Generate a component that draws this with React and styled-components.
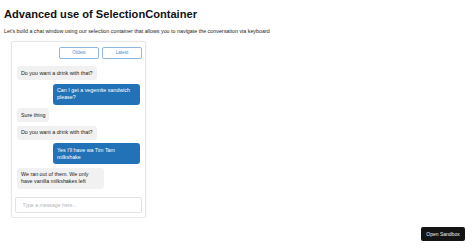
import React from "react";
import styled, { createGlobalStyle } from "styled-components";

const Global = createGlobalStyle`
  html, body { margin: 0; padding: 0; background: #ffffff; }
  body { font-family: "Liberation Sans", Arial, sans-serif; color: #111; }
`;

const Page = styled.div`
  padding: 0 4px;
`;

const Title = styled.h2`
  margin: 6.7px 0 0;
  font-size: 11.1px;
  line-height: 14px;
  font-weight: 700;
  color: #111;
`;

const Intro = styled.p`
  margin: 7px 0 0;
  font-size: 5.35px;
  line-height: 7px;
  color: #222;
`;

const Chat = styled.div`
  margin: 6.3px 0 0 7px;
  width: 135px;
  box-sizing: border-box;
  border: 1px solid #e6e6e6;
  border-radius: 2px;
  box-shadow: 0 0 2px rgba(0, 0, 0, 0.06);
  display: flex;
  flex-direction: column;
  padding: 5px 3px 4px;
`;

const Toolbar = styled.div`
  display: flex;
  justify-content: flex-end;
  gap: 3px;
`;

const NavButton = styled.button`
  width: 40px;
  height: 12.5px;
  padding: 0;
  border: 1px solid #8db8e0;
  border-radius: 2px;
  background: #fff;
  color: #4a8fd0;
  font-family: "Liberation Sans", Arial, sans-serif;
  font-size: 4.6px;
  line-height: 1;
  cursor: pointer;
`;

const Messages = styled.div`
  display: flex;
  flex-direction: column;
  gap: 3.4px;
  padding: 6.5px 2px 0;
`;

const Bubble = styled.div`
  max-width: 79px;
  padding: 3.6px 4px;
  border-radius: 3px;
  font-size: 5.35px;
  line-height: 7px;
  align-self: ${(p) => (p.$mine ? "flex-end" : "flex-start")};
  background: ${(p) => (p.$mine ? "#2272b8" : "#f1f1f1")};
  color: ${(p) => (p.$mine ? "#ffffff" : "#1a1a1a")};
`;

const Input = styled.input`
  margin-top: 8px;
  height: 16px;
  box-sizing: border-box;
  border: 1px solid #e3e3e3;
  border-radius: 2px;
  padding: 0 6.5px;
  font-family: "Liberation Sans", Arial, sans-serif;
  font-size: 5.2px;
  color: #333;
  outline: none;
  &::placeholder { color: #b5b5b5; }
`;

const Sandbox = styled.button`
  position: fixed;
  right: 9px;
  bottom: 7px;
  width: 44px;
  height: 14px;
  padding: 0;
  border: none;
  border-radius: 2px;
  background: #141414;
  color: #f2f2f2;
  font-family: "Liberation Sans", Arial, sans-serif;
  font-size: 5px;
`;

const messages = [
  { mine: false, text: "Do you want a drink with that?" },
  { mine: true, text: "Can I get a vegemite sandwich please?" },
  { mine: false, text: "Sure thing" },
  { mine: false, text: "Do you want a drink with that?" },
  { mine: true, text: "Yes I'll have wa Tim Tam milkshake" },
  { mine: false, text: "We ran out of them. We only have vanilla milkshakes left" },
];

export default function App() {
  return (
    <>
      <Global />
      <Page>
        <Title>Advanced use of SelectionContainer</Title>
        <Intro>
          Let's build a chat window using our selection container that allows you to navigate the conversation via keyboard
        </Intro>
        <Chat>
          <Toolbar>
            <NavButton>Oldest</NavButton>
            <NavButton>Latest</NavButton>
          </Toolbar>
          <Messages>
            {messages.map((m, i) => (
              <Bubble key={i} $mine={m.mine}>{m.text}</Bubble>
            ))}
          </Messages>
          <Input placeholder="Type a message here..." />
        </Chat>
      </Page>
      <Sandbox>Open Sandbox</Sandbox>
    </>
  );
}
